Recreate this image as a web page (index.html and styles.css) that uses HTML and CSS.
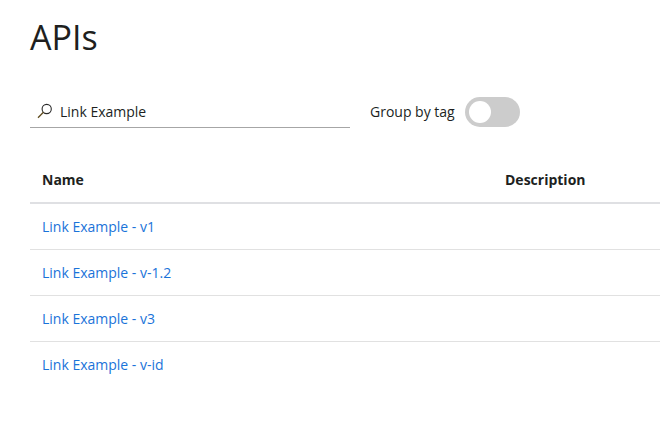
FILE: index.html
```html
<!DOCTYPE html>
<html lang="en">
<head>
<meta charset="utf-8">
<title>APIs</title>
<link rel="stylesheet" href="styles.css">
</head>
<body>
<main class="page">
  <h1 class="title">APIs</h1>
  <div class="filters">
    <label class="search">
      <svg class="search-icon" width="16" height="16" viewBox="0 0 16 16" fill="none" aria-hidden="true">
        <circle cx="9.7" cy="6" r="4.6" stroke="#2a2a2a" stroke-width="1.1"/>
        <path d="M6.4 9.3 1 14.7" stroke="#5e4a1c" stroke-width="1.3"/>
      </svg>
      <span class="search-value">Link Example</span>
    </label>
    <div class="group">
      <span class="group-label">Group by tag</span>
      <span class="toggle"><span class="knob"></span></span>
    </div>
  </div>
  <div class="table">
    <div class="row head">
      <div class="col-name">Name</div>
      <div class="col-desc">Description</div>
    </div>
    <div class="row"><a class="col-name link">Link Example - v1</a></div>
    <div class="row"><a class="col-name link">Link Example - v-1.2</a></div>
    <div class="row"><a class="col-name link">Link Example - v3</a></div>
    <div class="row"><a class="col-name link">Link Example - v-id</a></div>
  </div>
</main>
</body>
</html>
```
FILE: styles.css
```css
html, body { margin: 0; padding: 0; background: #fff; overflow: hidden; }
body { font-family: "Open Sans", sans-serif; color: #201f1e; font-size: 14px; width: 660px; height: 442px; }
.page { padding: 14px 0 0 30px; }
.title { margin: 0; font-size: 34px; font-weight: 400; line-height: 46px; }
.filters { display: flex; align-items: flex-start; margin-top: 37px; height: 31px; }
.search { display: flex; align-items: center; width: 320px; height: 31px; box-sizing: border-box; border-bottom: 1px solid #a6a6a6; padding-left: 7px; padding-bottom: 2px; }
.search-icon { margin-right: 7px; }
.group { display: flex; align-items: center; height: 30px; margin-left: 20px; }
.group-label { margin-right: 10px; padding-bottom: 2px; }
.toggle { display: flex; align-items: center; width: 55px; height: 30px; border-radius: 15px; background: #cccccc; box-sizing: border-box; padding-left: 4px; }
.knob { width: 22px; height: 22px; border-radius: 50%; background: #fff; }
.table { margin-top: 30px; }
.row { display: flex; align-items: center; height: 46px; box-sizing: border-box; border-bottom: 1px solid #e1e1e1; }
.row:last-child { border-bottom-color: transparent; }
.head { font-weight: 700; border-bottom: 2px solid #dfe0e3; padding-bottom: 2px; }
.col-name { margin-left: 12px; width: 463px; }
.link { color: #1a73d9; }
```
